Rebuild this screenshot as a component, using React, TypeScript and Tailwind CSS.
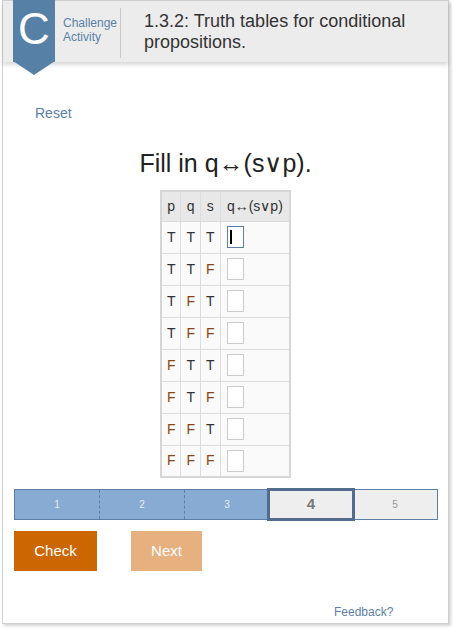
import React from "react";

const rows = [
  ["T", "T", "T"],
  ["T", "T", "F"],
  ["T", "F", "T"],
  ["T", "F", "F"],
  ["F", "T", "T"],
  ["F", "T", "F"],
  ["F", "F", "T"],
  ["F", "F", "F"],
];

function TruthCell({ v }: { v: string }) {
  return (
    <td
      className={
        "border border-[#dcdcdc] px-[5px] text-center " +
        (v === "F" ? "text-[#8b4513]" : "text-[#333]")
      }
    >
      {v}
    </td>
  );
}

export default function App() {
  return (
    <div
      className="w-[453px] h-[629px] bg-white relative overflow-hidden"
      style={{ fontFamily: '"Liberation Sans", Arial, sans-serif' }}
    >
      <div className="ml-[2px] w-[447px] h-[624px] border border-[#cfcfcf] bg-white shadow-[2px_2px_3px_rgba(0,0,0,0.18)] flex flex-col">
        {/* header */}
        <div className="relative h-[61px] bg-[#ececec] shadow-[0_3px_4px_rgba(0,0,0,0.15)] flex items-start shrink-0 z-10">
          <div className="relative ml-[10px] w-[42px] h-[62px] -mt-px bg-[#5780a6] flex items-center justify-center">
            <span className="text-white text-[44px] leading-none font-normal -mt-[4px]">C</span>
            <div className="absolute left-0 top-[61px] w-0 h-0 border-l-[21px] border-r-[21px] border-t-[14px] border-l-transparent border-r-transparent border-t-[#5780a6]" />
          </div>
          <div className="ml-[8px] mt-[15px] text-[12px] leading-[14px] text-[#5b7fa6]">
            <div>Challenge</div>
            <div>Activity</div>
          </div>
          <div className="ml-[3px] mt-[7px] w-px h-[50px] bg-[#c8c8c8]" />
          <div className="ml-[23px] mt-[10px] text-[18px] leading-[21px] text-[#333]">
            1.3.2: Truth tables for conditional
            <br />
            propositions.
          </div>
        </div>

        {/* body */}
        <div className="pl-[32px] pt-[42px] text-[14px] leading-[18px] text-[#5b7fa6]">Reset</div>

        <div className="mt-[27px] text-center text-[25px] leading-[28px] text-[#222]">
          Fill in q↔(s∨p).
        </div>

        <div className="mt-[13px] flex justify-center">
          <table className="border-collapse border-2 border-[#d6d6d6] text-[14px] text-[#333]">
            <thead>
              <tr className="bg-[#e8e8e8] h-[30px]">
                <th className="border border-[#dcdcdc] px-[5px] font-normal">p</th>
                <th className="border border-[#dcdcdc] px-[5px] font-normal">q</th>
                <th className="border border-[#dcdcdc] px-[5px] font-normal">s</th>
                <th className="border border-[#dcdcdc] px-[5px] font-normal w-[70px]">q↔(s∨p)</th>
              </tr>
            </thead>
            <tbody>
              {rows.map((r, i) => (
                <tr key={i} className="bg-[#fafafa] h-[32px]">
                  <TruthCell v={r[0]} />
                  <TruthCell v={r[1]} />
                  <TruthCell v={r[2]} />
                  <td className="border border-[#dcdcdc] pl-[6px]">
                    <div
                      className={
                        "relative w-[17px] h-[22px] bg-white border " +
                        (i === 0 ? "border-[#5b7fa6] border-[1.5px]" : "border-[#cccccc]")
                      }
                    >
                      {i === 0 && <span className="absolute left-[2px] top-[3px] w-[2px] h-[14px] bg-black" />}
                    </div>
                  </td>
                </tr>
              ))}
            </tbody>
          </table>
        </div>

        {/* progress */}
        <div className="mt-[11px] ml-[11px] w-[424px] h-[31px] flex border border-[#5b7fa6] text-[10px] relative">
          <div className="flex-1 bg-[#87abd2] text-[#e8eef6] flex items-center justify-center border-r border-dashed border-[#5b7fa6]">1</div>
          <div className="flex-1 bg-[#87abd2] text-[#e8eef6] flex items-center justify-center border-r border-dashed border-[#5b7fa6]">2</div>
          <div className="flex-1 bg-[#87abd2] text-[#e8eef6] flex items-center justify-center">3</div>
          <div className="flex-1 bg-[#eeeeee] text-[#777] text-[15px] font-bold flex items-center justify-center outline-3 outline-[#536b8e] -outline-offset-[1px] relative z-10">4</div>
          <div className="flex-1 bg-[#eeeeee] text-[#999] flex items-center justify-center">5</div>
        </div>

        {/* buttons */}
        <div className="mt-[11px] ml-[11px] flex gap-[34px]">
          <div className="w-[83px] h-[40px] bg-[#cc6600] text-white text-[15px] flex items-center justify-center">Check</div>
          <div className="w-[71px] h-[40px] bg-[#e6b07f] text-white text-[15px] flex items-center justify-center">Next</div>
        </div>

        <div className="mt-[34px] ml-[331px] text-[12px] leading-[14px] text-[#5b7fa6]">Feedback?</div>
      </div>
    </div>
  );
}
